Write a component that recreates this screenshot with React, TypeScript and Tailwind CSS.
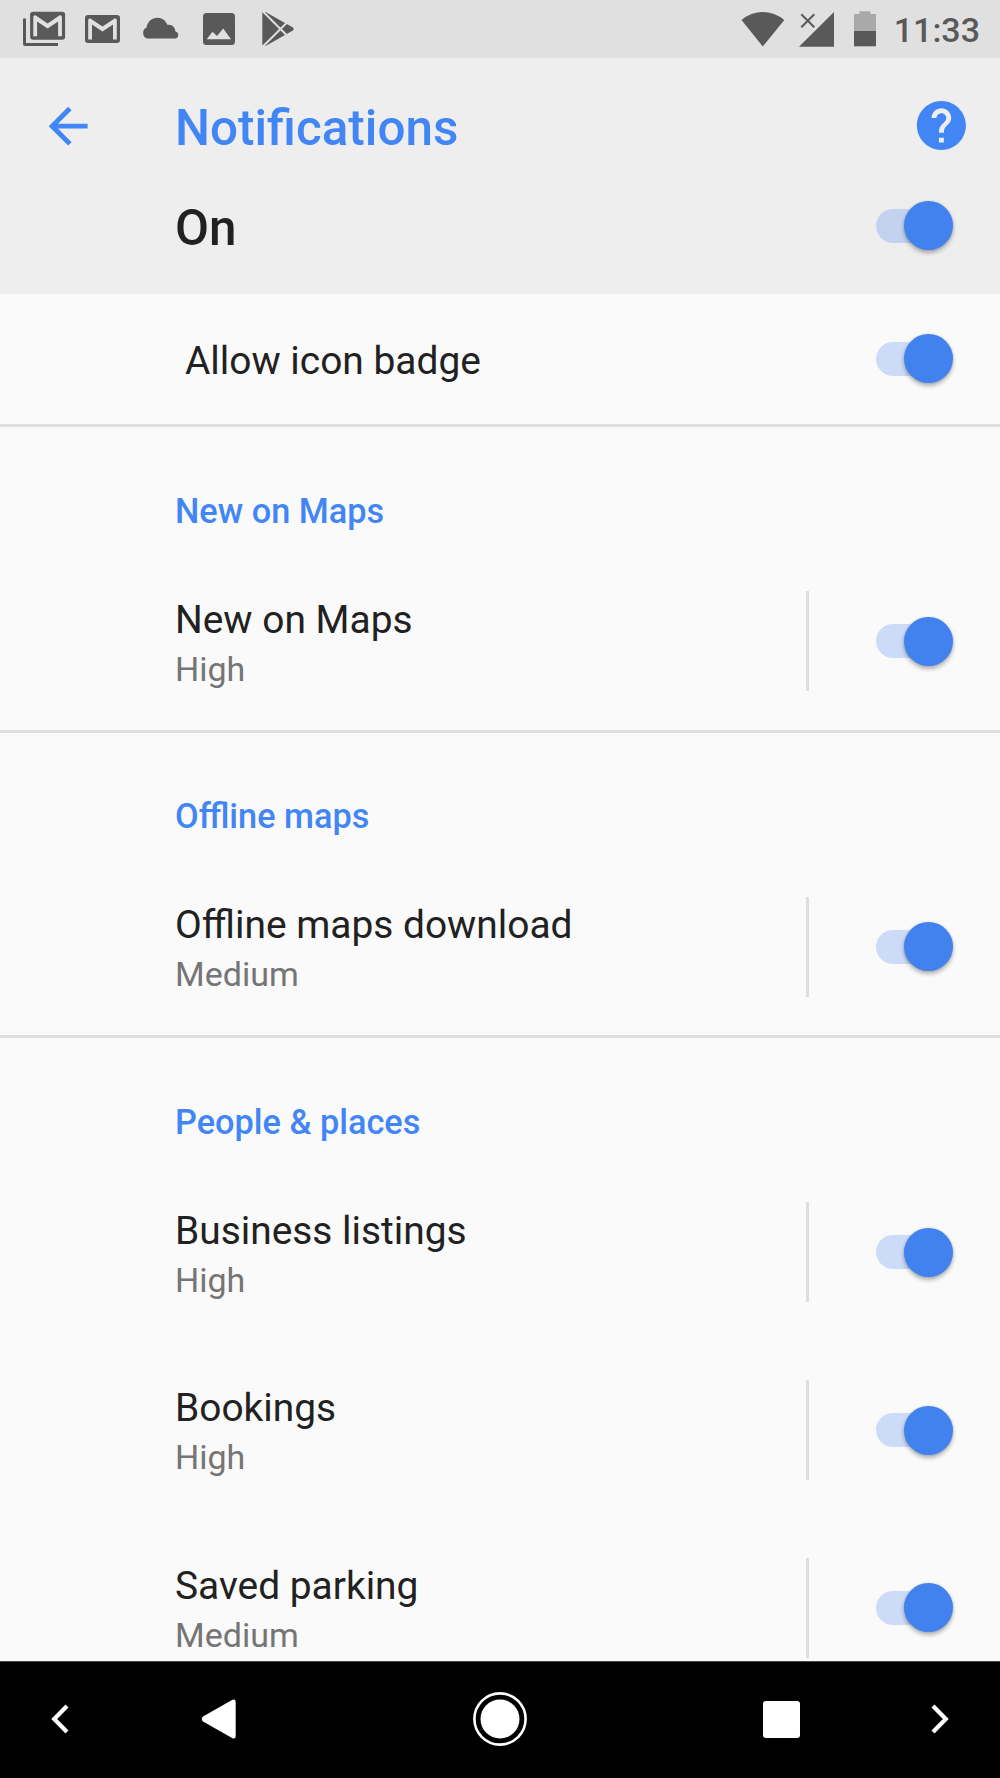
import { MdArrowBack, MdHelp } from 'react-icons/md';

interface Channel {
  name: string;
  importance: string;
}

interface Group {
  title: string;
  channels: Channel[];
}

const groups: Group[] = [
  {
    title: 'New on Maps',
    channels: [{ name: 'New on Maps', importance: 'High' }],
  },
  {
    title: 'Offline maps',
    channels: [{ name: 'Offline maps download', importance: 'Medium' }],
  },
  {
    title: 'People & places',
    channels: [
      { name: 'Business listings', importance: 'High' },
      { name: 'Bookings', importance: 'High' },
      { name: 'Saved parking', importance: 'Medium' },
    ],
  },
];

function MailGlyph() {
  return (
    <>
      <rect x="0" y="0" width="35" height="28" rx="3" fill="#595959" />
      <path d="M3.2 24.5V4.6L5 3.2L17.5 11.6L30 3.2L31.8 4.6V24.5H28V9.6L17.5 16.6L7 9.6V24.5Z" fill="#e0e0e0" />
    </>
  );
}

function StatusBar() {
  return (
    <div className="flex h-[58px] shrink-0 items-center justify-between bg-[#e0e0e0] pl-[23px] pr-[20px]">
      <div className="flex items-center">
        <svg className="mr-[18.5px] h-[36px] w-[43px]" viewBox="0 0 43 36">
          <path d="M0 7.5H3V32H35V35H2Q0 35 0 33Z" fill="#595959" />
          <g transform="translate(7.1 .8)">
            <MailGlyph />
          </g>
        </svg>
        <svg className="mr-[21px] h-[28px] w-[35px]" viewBox="0 0 35 28">
          <MailGlyph />
        </svg>
        <svg className="mr-[23.5px] mt-[-3px] h-[22px] w-[39px]" viewBox="0 0 39 22" fill="#595959">
          <path d="M6 21.5A6 6 0 0 1 5.5 10.5C6.5 4.5 11 .8 16.5 .8C21.5 .8 24.8 3.8 26.3 7.8C31 7 34 10 34.5 14.5A3.6 3.6 0 0 1 34.5 21.5Z" />
        </svg>
        <svg className="mr-[27px] h-[32px] w-[32px]" viewBox="0 0 32 32">
          <rect width="32" height="32" rx="3.5" fill="#595959" />
          <path d="M3.7 26.3L9.5 18.8L14 23L20.2 15.5L28 26.3Z" fill="#e0e0e0" />
        </svg>
        <svg className="h-[36px] w-[33px]" viewBox="0 0 33 36">
          <path d="M.3 1.5L3.5 1L31 16.5Q32.5 18 31 19.5L3.5 35L.3 34.5Z" fill="#595959" />
          <path d="M.5 0L25.5 25M.5 36L25.5 11" stroke="#e0e0e0" strokeWidth="2" />
        </svg>
      </div>
      <div className="flex items-center">
        <svg className="mr-[14px] h-[36px] w-[44px]" viewBox="0 0 44 36" fill="#595959">
          <path d="M21.8 35.5L.5 9Q10 1 21.8 1T43.3 9Z" />
        </svg>
        <svg className="mr-[18px] h-[36px] w-[36px]" viewBox="0 0 36 36">
          <path d="M0 35.7L35 1V35.7Z" fill="#595959" />
          <path d="M2.3 3.3L15.3 16.3M15.3 3.3L2.3 16.3" stroke="#595959" strokeWidth="2" />
        </svg>
        <svg className="mr-[17px] h-[36px] w-[24px]" viewBox="0 0 24 36">
          <path d="M1 3H6.5V.3H17.5V3H23V20H1Z" fill="#a9a9a9" />
          <path d="M1 20H23V35.3H1Z" fill="#595959" />
        </svg>
        <span className="pt-[2px] text-[34px] font-medium leading-none text-[#595959]">11:33</span>
      </div>
    </div>
  );
}

function Toggle() {
  return (
    <button className="flex h-[49px] w-[77px] shrink-0 items-center">
      <span className="flex h-[34px] w-[76px] items-center justify-end rounded-full bg-[#4285f4]/25">
        <span className="-mr-[0.5px] h-[49px] w-[49px] shrink-0 rounded-full bg-[#4282ee] shadow-[0_3px_4px_rgba(0,0,0,0.28),0_0_3px_rgba(0,0,0,0.12)]" />
      </span>
    </button>
  );
}

function ChannelRow({ name, importance }: Channel) {
  return (
    <div className="flex h-[177.7px] shrink-0 items-center pl-[175px] pr-[47px] pt-px">
      <div className="flex-1 pt-[5.5px]">
        <p className="text-[38.9px] leading-[50px] text-[#212121]">{name}</p>
        <p className="-mt-px text-[34px] leading-[50px] text-[#757575]">{importance}</p>
      </div>
      <div className="mr-[67px] h-[100px] w-[3px] bg-[#dedede]" />
      <Toggle />
    </div>
  );
}

function NavBar() {
  return (
    <nav className="flex h-[117px] shrink-0 items-center border-t border-[#4a4a4a] bg-black pb-[2px] text-white">
      <div className="flex w-[79px] justify-end pr-[10px]">
        <svg className="h-[30px] w-[18px]" viewBox="0 0 18 30" fill="none" stroke="currentColor" strokeWidth="4.2">
          <path d="M16 2L3.2 15L16 28" />
        </svg>
      </div>
      <div className="grid flex-1 grid-cols-3 items-center justify-items-center">
        <svg className="mr-[2px] h-[40px] w-[35px]" viewBox="0 0 35 40" fill="currentColor">
          <path d="M31.5 .8Q34.7 -.5 34.7 3V37Q34.7 40.5 31.5 39.2L2 22.5Q-.5 20 2 17.5Z" />
        </svg>
        <svg className="h-[56px] w-[56px]" viewBox="0 0 56 56">
          <circle cx="28" cy="28" r="25.6" fill="none" stroke="currentColor" strokeWidth="2.6" />
          <circle cx="28" cy="28" r="19.5" fill="currentColor" />
        </svg>
        <div className="ml-[2px] h-[37px] w-[37px] rounded-[3px] bg-white" />
      </div>
      <div className="flex w-[79px] justify-start pl-[10px]">
        <svg className="h-[30px] w-[18px]" viewBox="0 0 18 30" fill="none" stroke="currentColor" strokeWidth="4.2">
          <path d="M2 2L14.8 15L2 28" />
        </svg>
      </div>
    </nav>
  );
}

export default function App() {
  return (
    <div className="flex h-[1778px] w-[1000px] flex-col overflow-hidden bg-[#fafafa] font-[Roboto,sans-serif]">
      <StatusBar />

      <header className="h-[235.5px] shrink-0 bg-[#eeeeee]">
        <div className="flex h-[136px] items-center pl-[39px] pr-[29.5px] text-[#4285f4]">
          <MdArrowBack className="h-[58.3px] w-[58.3px]" />
          <h1 className="flex-1 pl-[77.7px] pt-[4px] text-[49.4px] font-medium leading-[60px]">Notifications</h1>
          <MdHelp className="mb-px h-[58.8px] w-[58.8px]" />
        </div>
        <div className="flex h-[63px] items-center justify-between pl-[175px] pr-[47px]">
          <span className="pt-[4px] text-[49.4px] font-medium leading-[58px] text-[#212121]">On</span>
          <Toggle />
        </div>
      </header>

      <main className="flex min-h-0 flex-1 flex-col overflow-hidden">
        <div className="flex h-[130.8px] shrink-0 items-center justify-between pl-[185px] pr-[47px]">
          <span className="pt-[5px] text-[38.9px] leading-[50px] text-[#212121]">Allow icon badge</span>
          <Toggle />
        </div>

        {groups.map((group) => (
          <section key={group.title} className="shrink-0">
            <div className="h-[3px] bg-[#dedede]" />
            <h2 className="flex h-[124.8px] items-center pl-[175px] pt-[43.5px] text-[34.3px] font-medium text-[#4285f4]">
              {group.title}
            </h2>
            {group.channels.map((channel) => (
              <ChannelRow key={channel.name} {...channel} />
            ))}
          </section>
        ))}
      </main>

      <NavBar />
    </div>
  );
}
